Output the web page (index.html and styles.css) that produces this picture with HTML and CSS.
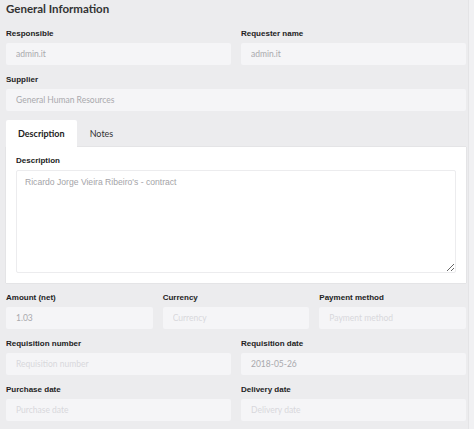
FILE: index.html
```html
<!DOCTYPE html>
<html lang="en">
<head>
    <meta charset="UTF-8">
    <meta name="viewport" content="width=device-width, initial-scale=1.0">
    <title>General Information</title>
    <link rel="stylesheet" href="styles.css">
</head>
<body>
    <div class="page">
        <h1 class="title">General Information</h1>

        <div class="row cols-2">
            <div class="field">
                <label>Responsible</label>
                <input class="input" type="text" value="admin.it" readonly>
            </div>
            <div class="field">
                <label>Requester name</label>
                <input class="input" type="text" value="admin.it" readonly>
            </div>
        </div>

        <div class="row">
            <div class="field">
                <label>Supplier</label>
                <input class="input" type="text" value="General Human Resources" readonly>
            </div>
        </div>

        <div class="tabs">
            <div class="tab active">Description</div>
            <div class="tab">Notes</div>
        </div>
        <div class="tab-panel">
            <label class="panel-label">Description</label>
            <textarea class="textarea" placeholder="Ricardo Jorge Vieira Ribeiro's - contract"></textarea>
        </div>

        <div class="row cols-3">
            <div class="field">
                <label>Amount (net)</label>
                <input class="input" type="text" value="1.03" readonly>
            </div>
            <div class="field">
                <label>Currency</label>
                <input class="input" type="text" placeholder="Currency">
            </div>
            <div class="field">
                <label>Payment method</label>
                <input class="input" type="text" placeholder="Payment method">
            </div>
        </div>

        <div class="row cols-2">
            <div class="field">
                <label>Requisition number</label>
                <input class="input" type="text" placeholder="Requisition number">
            </div>
            <div class="field">
                <label>Requisition date</label>
                <input class="input" type="text" value="2018-05-26" readonly>
            </div>
        </div>

        <div class="row cols-2">
            <div class="field">
                <label>Purchase date</label>
                <input class="input" type="text" placeholder="Purchase date">
            </div>
            <div class="field">
                <label>Delivery date</label>
                <input class="input" type="text" placeholder="Delivery date">
            </div>
        </div>
    </div>
</body>
</html>
```

FILE: styles.css
```css
body {
    margin: 0;
    padding: 0;
    background-color: #f1f1f3;
    font-family: "Liberation Sans", Arial, sans-serif;
    color: #222;
}
.page {
    width: 460px;
    min-height: 429px;
    padding: 0 2px 0 6px;
    background: #ececee;
    box-sizing: content-box;
    border-right: 1px solid #e4e4e6;
}
.title {
    margin: 0;
    padding-top: 1px;
    height: 28px;
    font-family: Lato, sans-serif;
    font-size: 11.5px;
    font-weight: 700;
    line-height: 16px;
    color: #333;
}
.row {
    display: grid;
    grid-template-columns: 1fr;
    column-gap: 10px;
    margin-bottom: 10px;
}
.cols-2 {
    grid-template-columns: 1fr 1fr;
}
.cols-3 {
    grid-template-columns: 1fr 1fr 1fr;
}
.field {
    display: flex;
    flex-direction: column;
}
.field label,
.panel-label {
    display: block;
    font-size: 8px;
    font-weight: 700;
    line-height: 10px;
    margin-bottom: 4px;
    color: #222;
}
.input {
    height: 22px;
    padding: 0 10px;
    border: none;
    border-radius: 2px;
    background: #f5f5f7;
    font-family: Lato, sans-serif;
    font-size: 8.5px;
    color: #a9a9ad;
    box-sizing: border-box;
    outline: none;
    width: 100%;
}
.input::placeholder {
    color: #d8d8dc;
}
.tabs {
    display: flex;
    margin-top: -1px;
    height: 27px;
}
.tab {
    display: flex;
    align-items: center;
    padding: 0 12px;
    font-family: Lato, sans-serif;
    font-size: 9px;
    color: #333;
    border-radius: 2px 2px 0 0;
}
.tab.active {
    background: #fff;
    font-weight: 700;
    color: #222;
}
.tab + .tab {
    padding-left: 13px;
}
.tab-panel {
    background: #fff;
    padding: 9px 10px 10px;
    margin-bottom: 10px;
    box-shadow: 0 0 1px rgba(0,0,0,0.2);
}
.textarea {
    display: block;
    width: 100%;
    height: 103px;
    box-sizing: border-box;
    padding: 5px 8px;
    border: 1px solid #ececee;
    border-radius: 2px;
    font-family: "Liberation Sans", Arial, sans-serif;
    font-size: 8.6px;
    line-height: 1.4;
    color: #999;
    background: #fff;
    outline: none;
}
.textarea::placeholder {
    color: #a4a4a8;
}
```
